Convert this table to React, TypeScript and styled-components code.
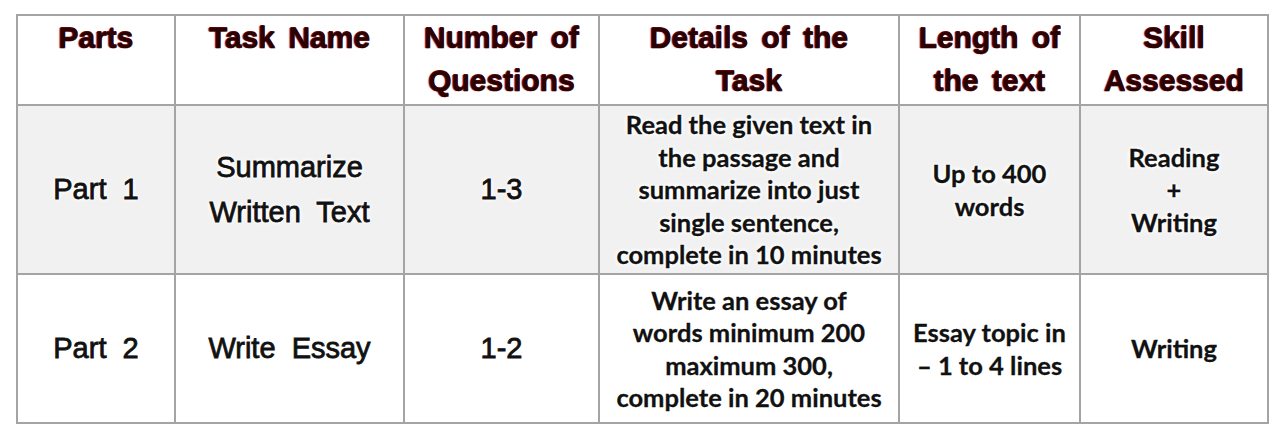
import React from "react";
import styled, { createGlobalStyle, css } from "styled-components";

const GlobalStyle = createGlobalStyle`
  html, body {
    margin: 0;
    padding: 0;
    background: #ffffff;
  }
`;

const Page = styled.div`
  padding: 14px 0 0 16px;
`;

const Table = styled.table`
  border-collapse: collapse;
  table-layout: fixed;
  width: 1253px;
`;

const HeadRow = styled.tr`
  height: 90px;
`;

const BodyRow = styled.tr<{ $shaded?: boolean; $height: number }>`
  height: ${({ $height }) => $height}px;
  background: ${({ $shaded }) => ($shaded ? "#f2f1f2" : "#ffffff")};
`;

const HeadCell = styled.th`
  border: 2px solid #a4a4a4;
  padding: 0 4px;
  vertical-align: top;
  text-align: center;
  font-family: "Liberation Sans", Arial, sans-serif;
  font-weight: 700;
  font-size: 30px;
  line-height: 43px;
  word-spacing: 5px;
  color: #2a0202;
  -webkit-text-stroke: 0.4px #2a0202;
  text-shadow: -1px 0 1px #9a1212, 0 -1px 0 #6a0808;
`;

const halo = css`
  text-shadow: 0 0 3px #ffffff, 0 0 4px #ffffff, 0 0 5px #ffffff,
    0 0 6px #ffffff;
`;

const NameCell = styled.td<{ $halo?: boolean }>`
  border: 2px solid #a4a4a4;
  padding: 0 4px;
  text-align: center;
  vertical-align: middle;
  white-space: pre-wrap;
  font-family: "Liberation Sans", Arial, sans-serif;
  font-size: 29px;
  line-height: 45px;
  color: #111111;
  -webkit-text-stroke: 0.8px #111111;
  ${({ $halo }) => $halo && halo}
`;

const InfoCell = styled.td<{ $halo?: boolean }>`
  border: 2px solid #a4a4a4;
  padding: 0 4px;
  text-align: center;
  vertical-align: middle;
  font-family: Lato, "Open Sans", sans-serif;
  font-weight: 700;
  font-size: 25.5px;
  line-height: 32.5px;
  color: #111111;
  -webkit-text-stroke: 0.3px #111111;
  ${({ $halo }) => $halo && halo}
`;

const columns = [158, 229, 195, 300, 181, 188];

const headers = [
  ["Parts"],
  ["Task Name"],
  ["Number of", "Questions"],
  ["Details of the", "Task"],
  ["Length of", "the text"],
  ["Skill", "Assessed"],
];

const rows = [
  {
    height: 169,
    shaded: true,
    part: "Part  1",
    task: ["Summarize", "Written  Text"],
    count: "1-3",
    details: [
      "Read the given text in",
      "the passage and",
      "summarize into just",
      "single sentence,",
      "complete in 10 minutes",
    ],
    length: ["Up to 400", "words"],
    skill: ["Reading", "+", "Writing"],
  },
  {
    height: 149,
    shaded: false,
    part: "Part  2",
    task: ["Write  Essay"],
    count: "1-2",
    details: [
      "Write an essay of",
      "words minimum 200",
      "maximum 300,",
      "complete in 20 minutes",
    ],
    length: ["Essay topic in", "\u2013 1 to 4 lines"],
    skill: ["Writing"],
  },
];

const Lines = ({ lines }: { lines: string[] }) => (
  <>
    {lines.map((line, i) => (
      <React.Fragment key={i}>
        {i > 0 && <br />}
        {line}
      </React.Fragment>
    ))}
  </>
);

export default function App() {
  return (
    <>
      <GlobalStyle />
      <Page>
        <Table>
          <colgroup>
            {columns.map((w, i) => (
              <col key={i} style={{ width: w }} />
            ))}
          </colgroup>
          <thead>
            <HeadRow>
              {headers.map((h, i) => (
                <HeadCell key={i}>
                  <Lines lines={h} />
                </HeadCell>
              ))}
            </HeadRow>
          </thead>
          <tbody>
            {rows.map((r, i) => (
              <BodyRow key={i} $shaded={r.shaded} $height={r.height}>
                <NameCell $halo={r.shaded}>{r.part}</NameCell>
                <NameCell $halo={r.shaded}>
                  <Lines lines={r.task} />
                </NameCell>
                <NameCell $halo={r.shaded}>{r.count}</NameCell>
                <InfoCell $halo={r.shaded}>
                  <Lines lines={r.details} />
                </InfoCell>
                <InfoCell $halo={r.shaded}>
                  <Lines lines={r.length} />
                </InfoCell>
                <InfoCell $halo={r.shaded}>
                  <Lines lines={r.skill} />
                </InfoCell>
              </BodyRow>
            ))}
          </tbody>
        </Table>
      </Page>
    </>
  );
}
